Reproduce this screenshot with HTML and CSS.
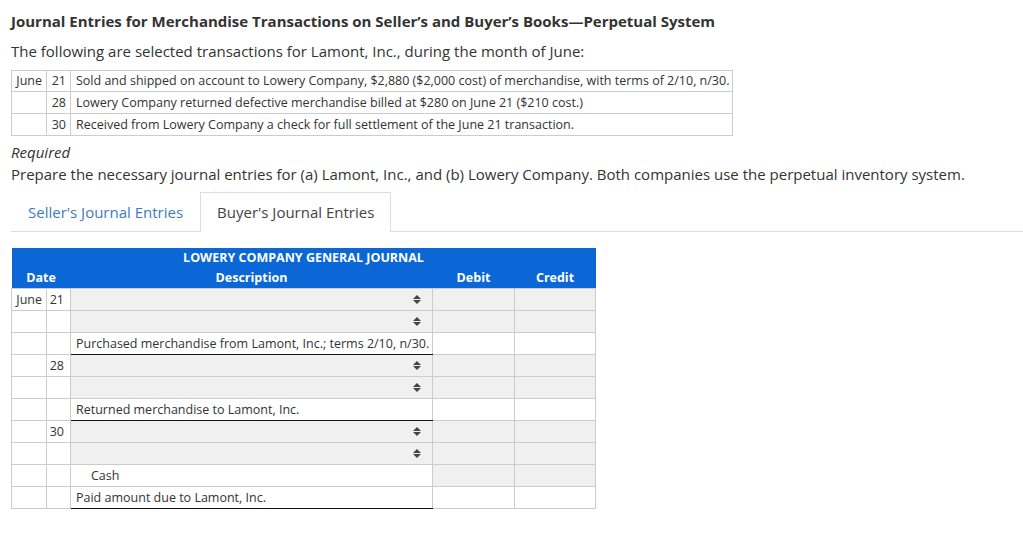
FILE: index.html
```html
<!DOCTYPE html>
<html>
<head>
<meta charset="utf-8">
<link rel="stylesheet" href="styles.css">
</head>
<body>
<div class="page">
  <h1 class="title">Journal Entries for Merchandise Transactions on Seller’s and Buyer’s Books—Perpetual System</h1>
  <p class="intro">The following are selected transactions for Lamont, Inc., during the month of June:</p>
  <table class="tx">
    <colgroup><col class="c-m"><col class="c-d"><col></colgroup>
    <tr><td class="m">June</td><td class="d">21</td><td class="t">Sold and shipped on account to Lowery Company, $2,880 ($2,000 cost) of merchandise, with terms of 2/10, n/30.</td></tr>
    <tr><td class="m"></td><td class="d">28</td><td class="t">Lowery Company returned defective merchandise billed at $280 on June 21 ($210 cost.)</td></tr>
    <tr><td class="m"></td><td class="d">30</td><td class="t">Received from Lowery Company a check for full settlement of the June 21 transaction.</td></tr>
  </table>
  <p class="req">Required</p>
  <p class="prep">Prepare the necessary journal entries for (a) Lamont, Inc., and (b) Lowery Company. Both companies use the perpetual inventory system.</p>
  <div class="tabs">
    <div class="tab">Seller's Journal Entries</div>
    <div class="tab active">Buyer's Journal Entries</div>
  </div>
  <table class="jr">
    <colgroup><col class="c-m"><col class="c-d"><col class="c-desc"><col class="c-dr"><col class="c-cr"></colgroup>
    <thead>
      <tr class="h1"><th colspan="5">LOWERY COMPANY GENERAL JOURNAL</th></tr>
      <tr class="h2"><th colspan="2">Date</th><th>Description</th><th>Debit</th><th>Credit</th></tr>
    </thead>
    <tbody>
      <tr class="sel"><td class="m">June</td><td class="d">21</td><td class="desc"><span class="arr"></span></td><td class="g"></td><td class="g"></td></tr>
      <tr class="sel"><td class="m"></td><td class="d"></td><td class="desc"><span class="arr"></span></td><td class="g"></td><td class="g"></td></tr>
      <tr class="exp"><td class="m"></td><td class="d"></td><td class="desc">Purchased merchandise from Lamont, Inc.; terms 2/10, n/30.</td><td></td><td></td></tr>
      <tr class="sel"><td class="m"></td><td class="d">28</td><td class="desc"><span class="arr"></span></td><td class="g"></td><td class="g"></td></tr>
      <tr class="sel"><td class="m"></td><td class="d"></td><td class="desc"><span class="arr"></span></td><td class="g"></td><td class="g"></td></tr>
      <tr class="exp"><td class="m"></td><td class="d"></td><td class="desc">Returned merchandise to Lamont, Inc.</td><td></td><td></td></tr>
      <tr class="sel"><td class="m"></td><td class="d">30</td><td class="desc"><span class="arr"></span></td><td class="g"></td><td class="g"></td></tr>
      <tr class="sel"><td class="m"></td><td class="d"></td><td class="desc"><span class="arr"></span></td><td class="g"></td><td class="g"></td></tr>
      <tr class="acct"><td class="m"></td><td class="d"></td><td class="desc indent">Cash</td><td class="g"></td><td class="g"></td></tr>
      <tr class="exp"><td class="m"></td><td class="d"></td><td class="desc">Paid amount due to Lamont, Inc.</td><td></td><td></td></tr>
    </tbody>
  </table>
</div>
</body>
</html>
```

FILE: styles.css
```css
html, body {
  margin: 0;
  padding: 0;
  background: #fff;
}
body {
  font-family: "Open Sans", "Noto Sans", sans-serif;
  color: #333;
}
.page {
  padding: 11px 0 0 11px;
}
.title {
  margin: 0;
  font-size: 15px;
  line-height: 20px;
  font-weight: 700;
  color: #333;
}
.intro {
  margin: 10px 0 0 0;
  font-size: 15px;
  line-height: 20px;
}
.tx {
  border-collapse: collapse;
  table-layout: fixed;
  margin-top: 9px;
  width: 722px;
  font-size: 12.5px;
  color: #333;
}
.tx col.c-m { width: 35px; }
.tx col.c-d { width: 24px; }
.tx td {
  border: 1px solid #ccc;
  height: 21px;
  padding: 0 5px;
  line-height: 20px;
  white-space: nowrap;
}
.tx tr:first-child td { height: 20px; }
.tx td.m { text-align: right; padding: 0 4px; }
.tx td.d { text-align: right; padding: 0 4px; }
.req {
  margin: 6px 0 0 0;
  font-size: 15px;
  line-height: 20px;
  font-style: italic;
}
.prep {
  margin: 2px 0 0 0;
  font-size: 15px;
  line-height: 20px;
}
.tabs {
  display: flex;
  margin-top: 8px;
  border-bottom: 1px solid #ddd;
  height: 39px;
}
.tab {
  padding: 0 16px;
  font-size: 15px;
  line-height: 39px;
  color: #3b7cc0;
  border: 1px solid transparent;
  border-bottom: none;
  height: 39px;
  box-sizing: border-box;
  margin-bottom: -1px;
}
.tab.active {
  color: #444;
  background: #fff;
  border-color: #ddd;
  height: 40px;
  line-height: 38px;
}
.jr {
  margin-top: 16px;
  border-collapse: collapse;
  table-layout: fixed;
  width: 584px;
  font-size: 12.5px;
  color: #333;
}
.jr col.c-m { width: 35px; }
.jr col.c-d { width: 24px; }
.jr col.c-desc { width: 362px; }
.jr col.c-dr { width: 82px; }
.jr col.c-cr { width: 81px; }
.jr th {
  background: #0b67d5;
  color: #fff;
  font-weight: 700;
  font-size: 12.5px;
  padding: 0;
}
.jr .h1 th { height: 19px; line-height: 20px; vertical-align: bottom; }
.jr .h2 th { height: 19px; line-height: 20px; vertical-align: middle; }
.jr td {
  border: 1px solid #ccc;
  height: 21px;
  padding: 0 5px;
  line-height: 20px;
  white-space: nowrap;
  background: #fff;
}
.jr td.m { text-align: right; padding: 0 4px 0 2px; }
.jr td.d { text-align: right; padding: 0 6px 0 2px; }
.jr td.g { background: #f0f0f0; }
.jr tr.sel td.desc { background: #f0f0f0; text-align: right; padding-right: 11px; }
.jr tr.exp td.desc { border-bottom: 1px solid #111; }
.jr td.indent { padding-left: 20px; }
.arr {
  display: inline-block;
  position: relative;
  width: 8px;
  height: 9px;
  vertical-align: middle;
  top: -1px;
}
.arr::before, .arr::after {
  content: "";
  position: absolute;
  left: 0;
  width: 0;
  height: 0;
  border-left: 4px solid transparent;
  border-right: 4px solid transparent;
}
.arr::before { top: 0; border-bottom: 4px solid #444; }
.arr::after { bottom: 0; border-top: 4px solid #444; }
```
